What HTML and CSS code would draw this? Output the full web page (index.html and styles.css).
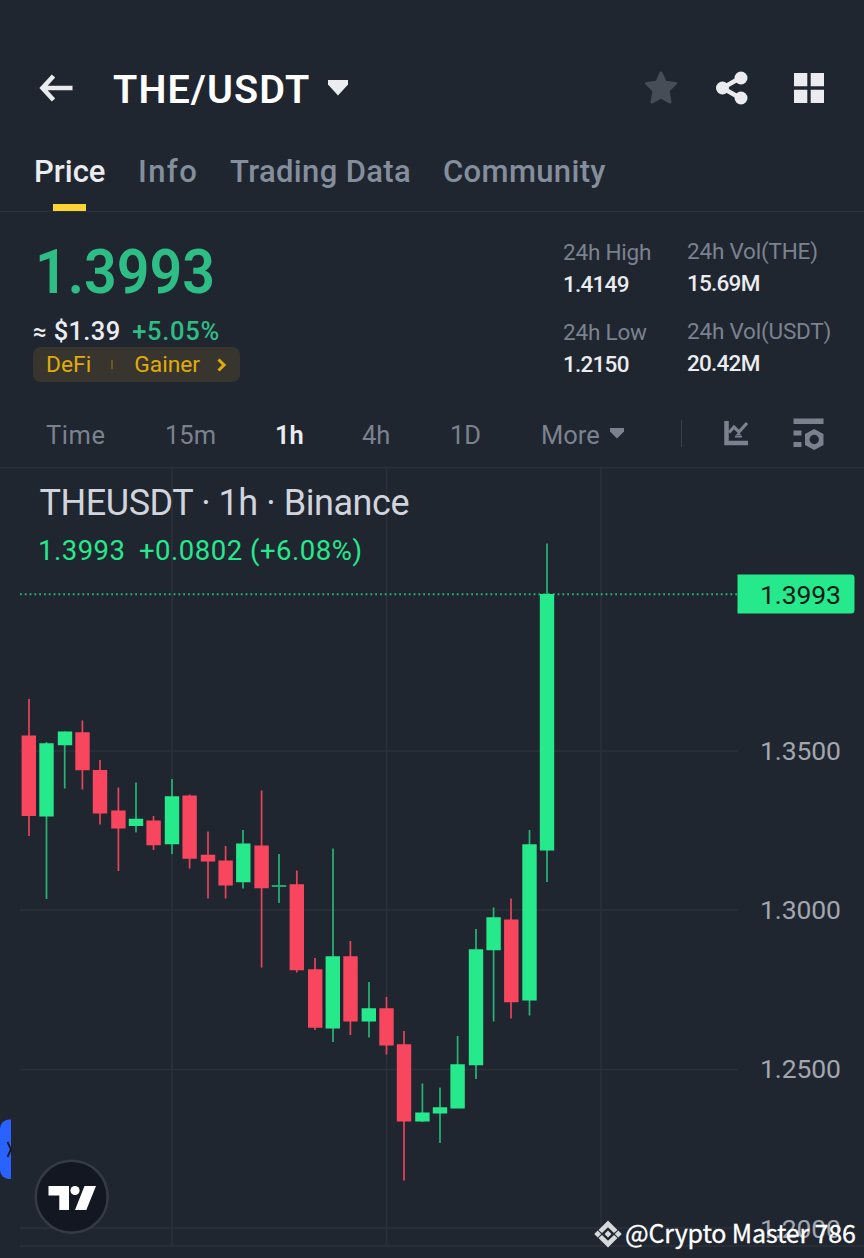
FILE: index.html
```html
<!DOCTYPE html>
<html lang="en">
<head>
    <meta charset="UTF-8">
    <meta name="viewport" content="width=device-width, initial-scale=1.0">
    <title>THE/USDT</title>
    <link rel="stylesheet" href="styles.css">
</head>
<body>
    <div class="header">
        <svg class="back" width="34" height="28" viewBox="0 0 34 28">
            <path d="M14.500 2L3.500 14L14.500 26M3.500 14H33.500" fill="none" stroke="#eaecef" stroke-width="4.600"/>
        </svg>
        <h1>THE/USDT</h1>
        <svg class="caret" width="20" height="16" viewBox="0 0 20 16">
            <path d="M0 0H20V4.500L10 15.500L0 4.500z" fill="#eaecef"/>
        </svg>
        <div class="header-icons">
            <svg width="34" height="34" viewBox="0 0 34 34">
                <path d="M17 2L21.300 11.300L31.500 12.500L24 19.700L26 31L17 26.200L8 31L10 19.700L2.500 12.500L12.700 11.300z" fill="#474d57" stroke="#474d57" stroke-width="3" stroke-linejoin="round"/>
            </svg>
            <svg width="32" height="34" viewBox="0 0 32 34">
                <path d="M25 6.500L6.500 17L25 27.500" fill="none" stroke="#eaecef" stroke-width="4.500"/>
                <circle cx="25" cy="7" r="6.500" fill="#eaecef"/>
                <circle cx="6.500" cy="17" r="6.500" fill="#eaecef"/>
                <circle cx="25" cy="27" r="6.500" fill="#eaecef"/>
            </svg>
            <svg width="30" height="30" viewBox="0 0 30 30">
                <path d="M0 0h13.300v13.300H0zM16.700 0H30v13.300H16.700zM0 16.700h13.300V30H0zM16.700 16.700H30V30H16.700z" fill="#eaecef"/>
            </svg>
        </div>
    </div>

    <div class="tabs">
        <a class="tab active">Price</a>
        <a class="tab info">Info</a>
        <a class="tab trading">Trading Data</a>
        <a class="tab community">Community</a>
    </div>

    <div class="summary">
        <div class="price-box">
            <div class="last-price">1.3993</div>
            <div class="fiat"><span class="approx">≈</span> $1.39 <span class="change">+5.05%</span></div>
            <div class="tags">
                <span class="tag-defi">DeFi</span>
                <i></i>
                <span class="tag-gainer">Gainer</span>
                <svg width="10" height="14" viewBox="0 0 10 14">
                    <path d="M1.500 1.500L7 7L1.500 12.500" fill="none" stroke="#e0ab0c" stroke-width="3"/>
                </svg>
            </div>
        </div>
        <div class="stats">
            <div class="stat"><span>24h High</span><b>1.4149</b></div>
            <div class="stat"><span>24h Low</span><b>1.2150</b></div>
        </div>
        <div class="stats volume">
            <div class="stat"><span>24h Vol(THE)</span><b>15.69M</b></div>
            <div class="stat"><span>24h Vol(USDT)</span><b>20.42M</b></div>
        </div>
    </div>

    <div class="intervals">
        <span class="time">Time</span>
        <span class="m15">15m</span>
        <span class="h1 active">1h</span>
        <span class="h4">4h</span>
        <span class="d1">1D</span>
        <span class="more">More</span>
        <svg class="more-caret" width="14" height="11" viewBox="0 0 14 11">
            <path d="M0 0H14V3.500L7 10.500L0 3.500z" fill="#7b828f"/>
        </svg>
        <i></i>
        <svg class="chart-icon" width="25" height="26" viewBox="0 0 25 26">
            <path d="M2.500 1V23H24" fill="none" stroke="#7b828f" stroke-width="4.500"/>
            <path d="M5 12.500L10 7L15 12L23 3" fill="none" stroke="#7b828f" stroke-width="3.200"/>
            <path d="M14.500 12.500L18 15.500H11zM11 17.500H18V16H11z" fill="#7b828f"/>
        </svg>
        <svg class="settings-icon" width="31" height="32" viewBox="0 0 31 32">
            <path d="M0.500 0.500H30.500V6H0.500zM0.500 12.500H8.500V17.500H0.500zM0.500 24H8.500V29H0.500z" fill="#7b828f"/>
            <path fill-rule="evenodd" d="M21.200 11L30.500 16V27L21.200 32L12 27V16zM21.200 16.800A4.700 4.700 0 1 0 21.200 26.200A4.700 4.700 0 1 0 21.200 16.800z" fill="#7b828f"/>
        </svg>
    </div>

    <svg class="chart" width="864" height="791" viewBox="0 467 864 791">
        <!-- grid -->
        <path class="grid" d="M172 467V1246M386.500 467V1246M601 467V1246M20 751H738M20 910H738M20 1069.500H738M20 1228H738M20 1246H864"/>
        <path class="top-line" d="M0 467.500H864"/>

        <text class="symbol" x="39.500" y="515" textLength="370">THEUSDT · 1h · Binance</text>
        <text class="quote" x="38" y="560" textLength="87">1.3993</text>
        <text class="quote" x="139" y="560" textLength="223">+0.0802 (+6.08%)</text>

        <path class="price-line" d="M20 594.200H738"/>

        <!-- candles: wicks first, bodies on top -->
        <path class="wick up" d="M46.500 742V899M64.700 731.500V788.500M136 782.500V832.500M172 779V854M243 830V888.500M279 854V903M333 848.500V1042M369 982V1037.500M422.400 1083.500V1122M440 1087.500V1143M457.600 1036V1108M476 929V1079M493.600 907.500V1021.500M529.500 830V1015.500M547 543.500V882"/>
        <path class="wick down" d="M29 699V836M82.400 720.500V789.500M100 760V824.500M118.400 787.500V871M153.500 816V850M189.600 794.500V868.500M208 831.500V898.500M225.600 846V898.500M261.600 790.500V967.500M296.800 870.500V972.500M315 958V1030M350.400 941V1035M386.500 997V1054.500M404 1031V1180.500M511 898.500V1018.500"/>
        <path class="body up" d="M46.500 743.300V816.500M65 731.400V745.300M136 818.800V826M172 796.300V844.300M243.300 843.400V882.200M332.800 956.300V1028.500M368.800 1008.200V1021.500M422.400 1112.400V1121.500M440 1107.300V1113.500M457.600 1064.200V1108.500M476 949.200V1065.200M493.600 917.200V950.200M529.500 844.200V1000.500M547 594V850.500"/>
        <path class="body doji" d="M279 885V887"/>
        <path class="body down" d="M28.800 735.500V816M82.500 732.200V770.300M100 770V813.500M118.400 810.500V828.500M153.600 820.400V845.300M189.600 795.500V858.700M208 854.800V861.600M225.600 860.500V885.500M261.600 845.400V888.300M296.800 884.200V970.200M315.200 969.200V1027.800M350.500 956.300V1021.500M386.500 1008.200V1045.500M404 1044.300V1121.500M511.300 919.500V1002.200"/>

        <!-- price scale -->
        <path d="M737.500 574.500H851a3.500 3.500 0 0 1 3.500 3.500V610a3.500 3.500 0 0 1-3.500 3.500H737.500z" fill="#26e98c"/>
        <text class="scale current" x="760" y="603.500" textLength="81">1.3993</text>
        <text class="scale" x="760" y="760" textLength="81">1.3500</text>
        <text class="scale" x="760" y="919" textLength="81">1.3000</text>
        <text class="scale" x="760" y="1078" textLength="81">1.2500</text>
        <text class="scale" x="760" y="1238" textLength="81">1.2000</text>

        <!-- drawer handle -->
        <path d="M11 1119.500H9a9 9 0 0 0-9 9V1170a9 9 0 0 0 9 9H11z" fill="#2962ff"/>
        <path d="M7.500 1142L11 1149.500L7.500 1157" fill="none" stroke="#131722" stroke-width="1.800"/>

        <!-- TradingView logo -->
        <circle cx="71.700" cy="1196.700" r="36" fill="#131722" stroke="#363a45" stroke-width="2.500"/>
        <path d="M48.500 1186H69V1210H59.300V1195.500H48.500zM84.500 1186H96L86.300 1210H75z" fill="#fff"/>
        <circle cx="75" cy="1190.500" r="4.600" fill="#fff"/>

        <!-- watermark -->
        <g class="watermark">
            <path d="M608 1220.500L617.500 1230L614 1233L608 1227.300L602 1233L598.500 1230zM608 1247.500L617.500 1238L614 1235L608 1240.700L602 1235L598.500 1238zM608 1230.500L611.500 1234L608 1237.500L604.500 1234zM597.700 1230.500L601.200 1234L597.700 1237.500L594.200 1234zM618.300 1230.500L621.800 1234L618.300 1237.500L614.800 1234z" fill="#d8d9db"/>
            <text x="625" y="1243" textLength="231">@Crypto Master 786</text>
        </g>
    </svg>
</body>
</html>
```
FILE: styles.css
```css
body {
    font-family: Roboto, "Noto Sans", sans-serif;
    background-color: #202630;
    color: #eaecef;
    margin: 0;
    width: 864px;
    height: 1258px;
    overflow: hidden;
}

.header {
    display: flex;
    align-items: center;
    box-sizing: border-box;
    height: 136px;
    padding: 39px 40px 0 39px;
}

.header h1 {
    margin: 4px 0 0 40px;
    width: 197px;
    font-size: 39.5px;
    font-weight: 600;
    line-height: 46px;
    letter-spacing: 1.1px;
    color: #fff;
}

.caret {
    margin-left: 18px;
}

.header-icons {
    display: flex;
    align-items: center;
    margin-left: auto;
}

.header-icons svg:nth-child(2) {
    margin: 0 46px 0 38px;
}

.tabs {
    display: flex;
    box-sizing: border-box;
    height: 76px;
    padding-left: 34px;
    border-bottom: 1px solid #2b313c;
    font-size: 31px;
    font-weight: 500;
    line-height: 72px;
    letter-spacing: 0.35px;
    color: #848e9c;
}

.tab {
    white-space: nowrap;
}

.tab.active {
    color: #eaecef;
    width: 104px;
    letter-spacing: 0;
}

.tab.active::after {
    content: "";
    display: block;
    width: 33px;
    height: 7px;
    margin: -4px 0 0 19px;
    background-color: #fcd535;
}

.tab.info {
    width: 92px;
    letter-spacing: 1.4px;
}

.tab.trading {
    width: 213px;
}

.summary {
    display: flex;
    height: 190px;
    padding-left: 33px;
}

.price-box {
    width: 530px;
}

.last-price {
    margin: 24px 0 0 2px;
    font-size: 62px;
    font-weight: 600;
    line-height: 72px;
    color: #2ebd85;
    transform: scaleX(0.925);
    transform-origin: left;
}

.fiat {
    font-size: 25.5px;
    font-weight: 500;
    line-height: 36px;
    letter-spacing: 0.35px;
    margin-top: 5px;
}

.approx {
    display: inline-block;
    width: 14px;
    font-size: 24px;
}

.change {
    margin-left: 5px;
    letter-spacing: 0.7px;
    color: #2ebd85;
}

.tags {
    display: flex;
    align-items: center;
    box-sizing: border-box;
    width: 207px;
    height: 35px;
    margin-top: -3px;
    padding-left: 13px;
    border-radius: 8px;
    background-color: #37352e;
    color: #e0ab0c;
    font-size: 22.8px;
}

.tags i {
    width: 2px;
    height: 9px;
    margin: 0 21px 0 20px;
    background-color: #6d5a20;
}

.tags svg {
    margin-left: 17px;
}

.stats {
    width: 124px;
    padding-top: 25px;
    font-size: 22.5px;
    letter-spacing: -0.2px;
    white-space: nowrap;
}

.stat {
    height: 80px;
}

.stat span,
.stat b {
    display: block;
    line-height: 31px;
    color: #7b828f;
}

.stat b {
    font-weight: 500;
    line-height: 33px;
    letter-spacing: -0.75px;
    color: #eaecef;
}

.volume {
    padding-top: 24px;
}

.intervals {
    display: flex;
    align-items: center;
    height: 65px;
    padding-left: 46px;
    font-size: 25.5px;
    color: #7b828f;
}

.intervals .active {
    font-weight: 600;
    color: #eaecef;
}

.time {
    width: 119px;
    letter-spacing: 0.6px;
}

.m15 {
    width: 110px;
}

.h1 {
    width: 87px;
}

.h4 {
    width: 88px;
}

.d1 {
    width: 91px;
}

.more {
    width: 69px;
}

.more-caret,
.chart-icon {
    margin-bottom: 3px;
}

.intervals i {
    width: 1px;
    height: 27px;
    margin: 0 42px 2px 57px;
    background-color: #3a414d;
}

.settings-icon {
    margin: 0 0 1px 44px;
}

.chart {
    display: block;
}

.grid {
    fill: none;
    stroke: #2b303b;
    stroke-width: 1.5;
}

.top-line {
    stroke: #2a303b;
    stroke-width: 2;
}

.symbol {
    font-size: 36px;
    fill: #d1d4dc;
}

.quote {
    font-size: 27.5px;
    fill: #26e98c;
}

.price-line {
    stroke: #25b474;
    stroke-width: 2;
    stroke-dasharray: 1.8 3;
}

.wick {
    fill: none;
    stroke-width: 1.7;
}

.wick.up {
    stroke: #27b575;
}

.wick.down {
    stroke: #e8435a;
}

.body {
    fill: none;
    stroke-width: 14.4;
}

.body.up {
    stroke: #26e98c;
}

.body.doji {
    stroke: #27a56d;
}

.body.down {
    stroke: #f7465d;
}

.scale {
    font-size: 26.5px;
    fill: #a3a6af;
}

.scale.current {
    fill: #0c1a16;
}

.watermark text {
    font-family: "Noto Sans CJK SC", sans-serif;
    font-size: 25px;
    fill: #fff;
    stroke: #fff;
    stroke-width: 0.3;
}
```
